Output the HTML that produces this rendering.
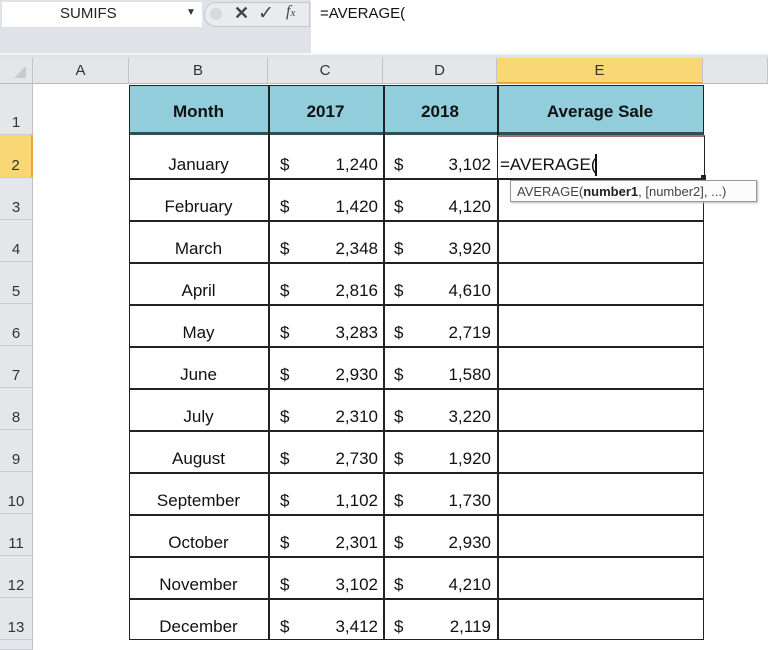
<!DOCTYPE html>
<html><head><style>
*{margin:0;padding:0;box-sizing:border-box}
body{width:768px;height:644px;background:#fff;position:relative;overflow:hidden;font-family:"Liberation Sans",sans-serif;color:#111}
.a{position:absolute}
.rh{position:absolute;left:0;width:33px;background:#e4e6ea;border-bottom:1px solid #c8ccd2;border-right:1px solid #c0c4ca;font-size:15px;color:#333;text-align:center;display:flex;align-items:flex-end;justify-content:center;padding-bottom:3px}
.ch{position:absolute;top:58px;height:26px;background:#e4e6ea;border-right:1px solid #c0c4ca;border-bottom:1px solid #b8bcc2;font-size:15px;color:#333;text-align:center;line-height:26px}
.m{position:absolute;left:129px;width:139px;text-align:center;font-size:17px}
.d1{position:absolute;left:280px;font-size:17px}
.v1{position:absolute;left:290px;width:88px;text-align:right;font-size:17px}
.d2{position:absolute;left:394px;font-size:17px}
.v2{position:absolute;left:400px;width:91px;text-align:right;font-size:17px}
.hl{position:absolute;left:129px;width:575px;height:1.5px;background:#222}
</style></head><body>
<div class="a" style="left:0;top:0;width:768px;height:58px;background:#dfe2e7"></div>
<div class="a" style="left:2px;top:2px;width:200px;height:25px;background:#fff"></div>
<div class="a" style="left:60px;top:5px;font-size:15px;color:#222">SUMIFS</div>
<div class="a" style="left:186px;top:7px;font-size:10px;color:#333">▼</div>
<div class="a" style="left:204px;top:2px;width:106px;height:25px;background:#e9ebee;border-radius:12px 0 0 12px;border:1px solid #c4c8ce"></div>
<div class="a" style="left:210px;top:8px;width:12px;height:12px;border-radius:6px;background:#d7d9dc"></div>
<div class="a" style="left:234px;top:3px;font-size:18px;color:#444;font-weight:bold">✕</div>
<div class="a" style="left:258px;top:2px;font-size:19px;color:#444">✓</div>
<div class="a" style="left:286px;top:3px;font-size:16px;color:#444;font-style:italic;font-family:'Liberation Serif',serif">f<span style="font-size:11px">x</span></div>
<div class="a" style="left:311px;top:0;width:457px;height:53px;background:#fff"></div>
<div class="a" style="left:320px;top:5px;font-size:15px;color:#111">=AVERAGE(</div>
<div class="a" style="left:0;top:53px;width:768px;height:2px;background:#f4f5f7"></div>
<div class="ch" style="left:0;width:33px"><div class="a" style="left:14px;top:8px;width:0;height:0;border-left:12px solid transparent;border-bottom:12px solid #c6c9cd"></div></div>
<div class="ch" style="left:33px;width:96px">A</div>
<div class="ch" style="left:129px;width:139px">B</div>
<div class="ch" style="left:268px;width:115px">C</div>
<div class="ch" style="left:383px;width:114px">D</div>
<div class="ch" style="left:497px;width:206px;background:#f9d774;border-bottom:2px solid #e9a93a">E</div>
<div class="ch" style="left:703px;width:65px"></div>
<div class="rh" style="top:84px;height:51px">1</div>
<div class="rh" style="top:135px;height:43px;background:#f9d774;border-right:2px solid #e9a93a">2</div>
<div class="rh" style="top:178px;height:42px">3</div>
<div class="rh" style="top:220px;height:42px">4</div>
<div class="rh" style="top:262px;height:42px">5</div>
<div class="rh" style="top:304px;height:42px">6</div>
<div class="rh" style="top:346px;height:42px">7</div>
<div class="rh" style="top:388px;height:42px">8</div>
<div class="rh" style="top:430px;height:42px">9</div>
<div class="rh" style="top:472px;height:42px">10</div>
<div class="rh" style="top:514px;height:42px">11</div>
<div class="rh" style="top:556px;height:42px">12</div>
<div class="rh" style="top:598px;height:42px">13</div>
<div class="rh" style="top:640px;height:10px"></div>
<div class="a" style="left:129px;top:85px;width:575px;height:50px;background:#92cddc;border:1.5px solid #222;border-bottom:3px solid #2f4f57"></div>
<div class="a" style="left:268px;top:85px;width:1.5px;height:50px;background:#222"></div>
<div class="a" style="left:383px;top:85px;width:1.5px;height:50px;background:#222"></div>
<div class="a" style="left:497px;top:85px;width:1.5px;height:50px;background:#222"></div>
<div class="a" style="left:129px;top:102px;width:139px;text-align:center;font-weight:bold;font-size:17px">Month</div>
<div class="a" style="left:268px;top:102px;width:115px;text-align:center;font-weight:bold;font-size:17px">2017</div>
<div class="a" style="left:383px;top:102px;width:114px;text-align:center;font-weight:bold;font-size:17px">2018</div>
<div class="a" style="left:497px;top:102px;width:206px;text-align:center;font-weight:bold;font-size:17px">Average Sale</div>
<div class="a" style="left:129px;top:135px;width:575px;height:505px;border:1.5px solid #222;border-top:none"></div>
<div class="a" style="left:268px;top:135px;width:1.5px;height:505px;background:#222"></div>
<div class="a" style="left:383px;top:135px;width:1.5px;height:505px;background:#222"></div>
<div class="a" style="left:497px;top:135px;width:1.5px;height:505px;background:#222"></div>

<div class="hl" style="top:178px"></div><div class="hl" style="top:220px"></div><div class="hl" style="top:262px"></div><div class="hl" style="top:304px"></div><div class="hl" style="top:346px"></div><div class="hl" style="top:388px"></div><div class="hl" style="top:430px"></div><div class="hl" style="top:472px"></div><div class="hl" style="top:514px"></div><div class="hl" style="top:556px"></div><div class="hl" style="top:598px"></div>

<div class="m" style="top:155px">January</div><div class="d1" style="top:155px">$</div><div class="v1" style="top:155px">1,240</div><div class="d2" style="top:155px">$</div><div class="v2" style="top:155px">3,102</div>
<div class="m" style="top:197px">February</div><div class="d1" style="top:197px">$</div><div class="v1" style="top:197px">1,420</div><div class="d2" style="top:197px">$</div><div class="v2" style="top:197px">4,120</div>
<div class="m" style="top:239px">March</div><div class="d1" style="top:239px">$</div><div class="v1" style="top:239px">2,348</div><div class="d2" style="top:239px">$</div><div class="v2" style="top:239px">3,920</div>
<div class="m" style="top:281px">April</div><div class="d1" style="top:281px">$</div><div class="v1" style="top:281px">2,816</div><div class="d2" style="top:281px">$</div><div class="v2" style="top:281px">4,610</div>
<div class="m" style="top:323px">May</div><div class="d1" style="top:323px">$</div><div class="v1" style="top:323px">3,283</div><div class="d2" style="top:323px">$</div><div class="v2" style="top:323px">2,719</div>
<div class="m" style="top:365px">June</div><div class="d1" style="top:365px">$</div><div class="v1" style="top:365px">2,930</div><div class="d2" style="top:365px">$</div><div class="v2" style="top:365px">1,580</div>
<div class="m" style="top:407px">July</div><div class="d1" style="top:407px">$</div><div class="v1" style="top:407px">2,310</div><div class="d2" style="top:407px">$</div><div class="v2" style="top:407px">3,220</div>
<div class="m" style="top:449px">August</div><div class="d1" style="top:449px">$</div><div class="v1" style="top:449px">2,730</div><div class="d2" style="top:449px">$</div><div class="v2" style="top:449px">1,920</div>
<div class="m" style="top:491px">September</div><div class="d1" style="top:491px">$</div><div class="v1" style="top:491px">1,102</div><div class="d2" style="top:491px">$</div><div class="v2" style="top:491px">1,730</div>
<div class="m" style="top:533px">October</div><div class="d1" style="top:533px">$</div><div class="v1" style="top:533px">2,301</div><div class="d2" style="top:533px">$</div><div class="v2" style="top:533px">2,930</div>
<div class="m" style="top:575px">November</div><div class="d1" style="top:575px">$</div><div class="v1" style="top:575px">3,102</div><div class="d2" style="top:575px">$</div><div class="v2" style="top:575px">4,210</div>
<div class="m" style="top:617px">December</div><div class="d1" style="top:617px">$</div><div class="v1" style="top:617px">3,412</div><div class="d2" style="top:617px">$</div><div class="v2" style="top:617px">2,119</div>

<div class="a" style="left:497px;top:135px;width:208px;height:44px;border:1.5px solid #222;border-top:2px solid #a0706a;background:#fff"></div>
<div class="a" style="left:500px;top:155px;font-size:17px">=AVERAGE(</div>
<div class="a" style="left:595px;top:154px;width:1.5px;height:22px;background:#111"></div>
<div class="a" style="left:701px;top:175px;width:5px;height:5px;background:#222"></div>
<div class="a" style="left:510px;top:180px;width:247px;height:22px;background:#fcfcfc;border:1px solid #999;box-shadow:1px 1px 2px #bbb;font-size:13px;color:#444;padding:3px 0 0 6px;white-space:nowrap">AVERAGE(<b style="color:#222">number1</b>, [number2], ...)</div>
</body></html>
